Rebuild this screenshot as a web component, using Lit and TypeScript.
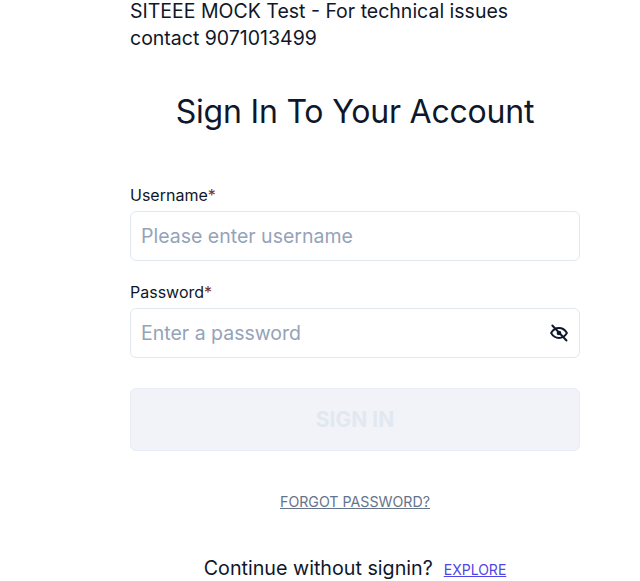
import { LitElement, html, css } from "lit";
import { customElement } from "lit/decorators.js";

@customElement("app-root")
export class AppRoot extends LitElement {
  static styles = css`
    :host {
      display: block;
      width: 640px;
      height: 581px;
      overflow: hidden;
      background: #fff;
      font-family: Inter, "Liberation Sans", sans-serif;
      color: #0f172a;
    }
    .wrap {
      width: 450px;
      margin-left: 130px;
      display: flex;
      flex-direction: column;
    }
    .notice {
      margin: -2px 0 0;
      font-size: 19.5px;
      line-height: 27px;
      height: 54px;
      color: #0f172a;
    }
    h1 {
      margin: 38px 0 0;
      font-size: 32px;
      line-height: 44px;
      font-weight: 400;
      text-align: center;
      color: #0f172a;
      letter-spacing: -0.2px;
    }
    .field {
      display: flex;
      flex-direction: column;
    }
    .first {
      margin-top: 49px;
    }
    .second {
      margin-top: 19px;
    }
    label {
      font-size: 16px;
      line-height: 25px;
      height: 28px;
      display: block;
      color: #0f172a;
    }
    .second label {
      line-height: 24px;
    }
    .req {
      color: #7c2d12;
    }
    .input {
      height: 50px;
      box-sizing: border-box;
      border: 1px solid #e2e8f0;
      border-radius: 6px;
      display: flex;
      align-items: center;
      padding: 0 10px;
      background: #fff;
    }
    input {
      flex: 1;
      min-width: 0;
      border: 0;
      outline: 0;
      padding: 0;
      font: inherit;
      font-size: 19.5px;
      background: transparent;
    }
    input::placeholder {
      color: #94a3b8;
      opacity: 1;
    }
    svg {
      flex: none;
      display: block;
    }
    button {
      margin-top: 30px;
      height: 63px;
      box-sizing: border-box;
      border: 1px solid #e8ecf4;
      border-radius: 6px;
      background: #f1f3f9;
      color: #e2e8f0;
      font: inherit;
      font-size: 21px;
      font-weight: 700;
      padding: 0;
    }
    .forgot {
      margin-top: 41px;
      text-align: center;
      font-size: 14.2px;
      line-height: 20px;
    }
    .forgot a {
      color: #64748b;
      text-decoration: underline;
    }
    .continue {
      margin-top: 43px;
      display: flex;
      justify-content: center;
      align-items: baseline;
      gap: 11px;
      font-size: 19.7px;
      line-height: 26px;
    }
    .continue a {
      font-size: 14px;
      color: #4f46e5;
      text-decoration: underline;
    }
  `;

  render() {
    return html`
      <div class="wrap">
        <p class="notice">SITEEE MOCK Test - For technical issues contact 9071013499</p>
        <h1>Sign In To Your Account</h1>
        <div class="field first">
          <label>Username<span class="req">*</span></label>
          <div class="input"><input placeholder="Please enter username" /></div>
        </div>
        <div class="field second">
          <label>Password<span class="req">*</span></label>
          <div class="input">
            <input type="password" placeholder="Enter a password" />
            <svg width="20" height="20" viewBox="0 0 24 24" fill="none" stroke="#0f172a" stroke-width="2.3" stroke-linecap="round" stroke-linejoin="round">
              <path d="M2.500 12c2.400-4 5.600-6 9.500-6s7.100 2 9.500 6c-2.400 4-5.600 6-9.500 6s-7.100-2-9.500-6z" />
              <circle cx="12" cy="12" r="2.800" fill="#0f172a" stroke="none" />
              <path d="M4 3 21 21" />
            </svg>
          </div>
        </div>
        <button disabled>SIGN IN</button>
        <div class="forgot"><a href="#">FORGOT PASSWORD?</a></div>
        <div class="continue"><span>Continue without signin?</span><a href="#">EXPLORE</a></div>
      </div>
    `;
  }
}
